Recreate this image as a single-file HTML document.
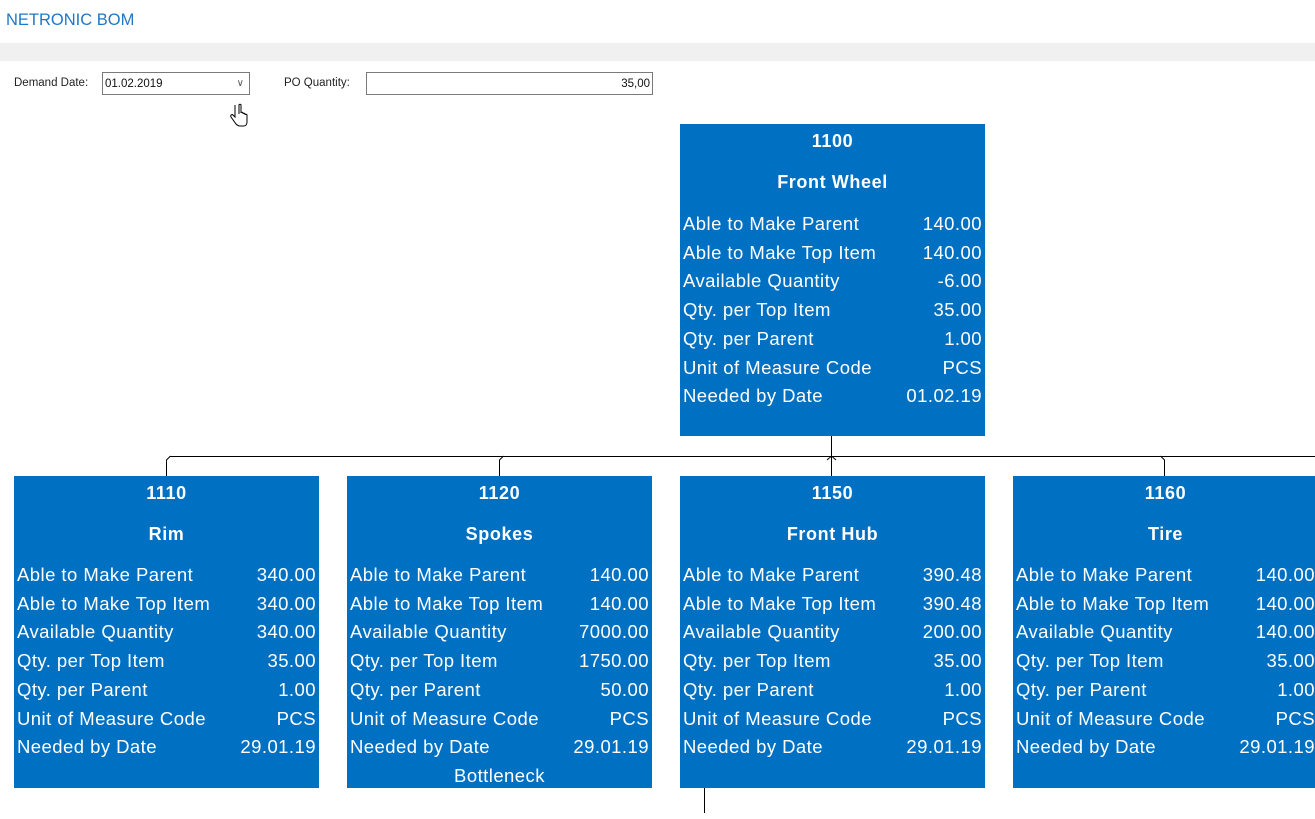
<!DOCTYPE html>
<html><head><meta charset="utf-8"><style>
*{margin:0;padding:0;box-sizing:border-box}
body{width:1315px;height:819px;overflow:hidden;background:#fff;font-family:"Liberation Sans",sans-serif;position:relative}
.title{position:absolute;left:6px;top:11px;font-size:16.5px;color:#1e78c8}
.band{position:absolute;left:0;top:43px;width:1315px;height:18px;background:#f0f0f0}
.lbl{position:absolute;top:77px;font-size:11.5px;color:#222}
.inp{position:absolute;top:72px;height:23px;border:1px solid #7a7a7a;font-size:11.5px;line-height:22px;padding:0 2px;color:#111}
.box{position:absolute;width:305px;height:312px;background:#0070c3;color:#fff}
.num,.name{position:absolute;left:0;width:100%;text-align:center;font-weight:bold;font-size:18px;letter-spacing:0.6px}
.num{top:7px}.name{top:48px}
.row{position:absolute;left:3px;right:3px;font-size:18.5px;letter-spacing:0.45px;display:flex;justify-content:space-between;height:22px;line-height:22px;white-space:nowrap}
.ln{position:absolute;background:#000}
</style></head><body>
<div class="title">NETRONIC BOM</div>
<div class="band"></div>
<div class="lbl" style="left:14px">Demand Date:</div>
<div class="inp" style="left:102px;width:148px">01.02.2019<span style="position:absolute;right:5px;top:0;font-size:10px;color:#555">&#8744;</span></div>
<div class="lbl" style="left:284px">PO Quantity:</div>
<div class="inp" style="left:366px;width:287px;text-align:right">35,00</div>
<svg style="position:absolute;left:228px;top:103px" width="22" height="26" viewBox="0 0 22 26"><path d="M7 2v12l-2-2c-1-1-3 0-2 2l5 7c1 1 2 2 4 2h4c2 0 3-2 3-4v-7c0-1-2-1-2 0v-1c0-1-2-1-2 0v-1c0-1-2-1-2 0V2c0-1-2-1-2 0v9" fill="#fff" stroke="#000" stroke-width="1"/></svg>

<div class="ln" style="left:831px;top:436px;width:1px;height:40px"></div>
<div class="ln" style="left:170px;top:456px;width:1145px;height:1px"></div>
<svg style="position:absolute;left:0;top:450px" width="1315" height="30"><g stroke="#000" fill="none" stroke-width="1"><path d="M166.5 26V10l4-4"/><path d="M499.5 26V10l4-4"/><path d="M827 10l4.5-4 4.5 4"/><path d="M1164.5 26V10l-4-4"/></g></svg>
<div class="ln" style="left:704px;top:787px;width:1px;height:26px"></div>

<div class="box" style="left:680px;top:124px"><div class="num">1100</div><div class="name">Front Wheel</div>
<div class="row" style="top:89px"><span>Able to Make Parent</span><span>140.00</span></div>
<div class="row" style="top:117.7px"><span>Able to Make Top Item</span><span>140.00</span></div>
<div class="row" style="top:146.4px"><span>Available Quantity</span><span>-6.00</span></div>
<div class="row" style="top:175.1px"><span>Qty. per Top Item</span><span>35.00</span></div>
<div class="row" style="top:203.8px"><span>Qty. per Parent</span><span>1.00</span></div>
<div class="row" style="top:232.5px"><span>Unit of Measure Code</span><span>PCS</span></div>
<div class="row" style="top:261.2px"><span>Needed by Date</span><span>01.02.19</span></div></div>

<div class="box" style="left:14px;top:476px"><div class="num">1110</div><div class="name">Rim</div>
<div class="row" style="top:88px"><span>Able to Make Parent</span><span>340.00</span></div>
<div class="row" style="top:116.7px"><span>Able to Make Top Item</span><span>340.00</span></div>
<div class="row" style="top:145.4px"><span>Available Quantity</span><span>340.00</span></div>
<div class="row" style="top:174.1px"><span>Qty. per Top Item</span><span>35.00</span></div>
<div class="row" style="top:202.8px"><span>Qty. per Parent</span><span>1.00</span></div>
<div class="row" style="top:231.5px"><span>Unit of Measure Code</span><span>PCS</span></div>
<div class="row" style="top:260.2px"><span>Needed by Date</span><span>29.01.19</span></div></div>

<div class="box" style="left:347px;top:476px"><div class="num">1120</div><div class="name">Spokes</div>
<div class="row" style="top:88px"><span>Able to Make Parent</span><span>140.00</span></div>
<div class="row" style="top:116.7px"><span>Able to Make Top Item</span><span>140.00</span></div>
<div class="row" style="top:145.4px"><span>Available Quantity</span><span>7000.00</span></div>
<div class="row" style="top:174.1px"><span>Qty. per Top Item</span><span>1750.00</span></div>
<div class="row" style="top:202.8px"><span>Qty. per Parent</span><span>50.00</span></div>
<div class="row" style="top:231.5px"><span>Unit of Measure Code</span><span>PCS</span></div>
<div class="row" style="top:260.2px"><span>Needed by Date</span><span>29.01.19</span></div>
<div class="row" style="top:288.9px;justify-content:center"><span>Bottleneck</span></div></div>

<div class="box" style="left:680px;top:476px"><div class="num">1150</div><div class="name">Front Hub</div>
<div class="row" style="top:88px"><span>Able to Make Parent</span><span>390.48</span></div>
<div class="row" style="top:116.7px"><span>Able to Make Top Item</span><span>390.48</span></div>
<div class="row" style="top:145.4px"><span>Available Quantity</span><span>200.00</span></div>
<div class="row" style="top:174.1px"><span>Qty. per Top Item</span><span>35.00</span></div>
<div class="row" style="top:202.8px"><span>Qty. per Parent</span><span>1.00</span></div>
<div class="row" style="top:231.5px"><span>Unit of Measure Code</span><span>PCS</span></div>
<div class="row" style="top:260.2px"><span>Needed by Date</span><span>29.01.19</span></div></div>

<div class="box" style="left:1013px;top:476px"><div class="num">1160</div><div class="name">Tire</div>
<div class="row" style="top:88px"><span>Able to Make Parent</span><span>140.00</span></div>
<div class="row" style="top:116.7px"><span>Able to Make Top Item</span><span>140.00</span></div>
<div class="row" style="top:145.4px"><span>Available Quantity</span><span>140.00</span></div>
<div class="row" style="top:174.1px"><span>Qty. per Top Item</span><span>35.00</span></div>
<div class="row" style="top:202.8px"><span>Qty. per Parent</span><span>1.00</span></div>
<div class="row" style="top:231.5px"><span>Unit of Measure Code</span><span>PCS</span></div>
<div class="row" style="top:260.2px"><span>Needed by Date</span><span>29.01.19</span></div></div>
</body></html>
